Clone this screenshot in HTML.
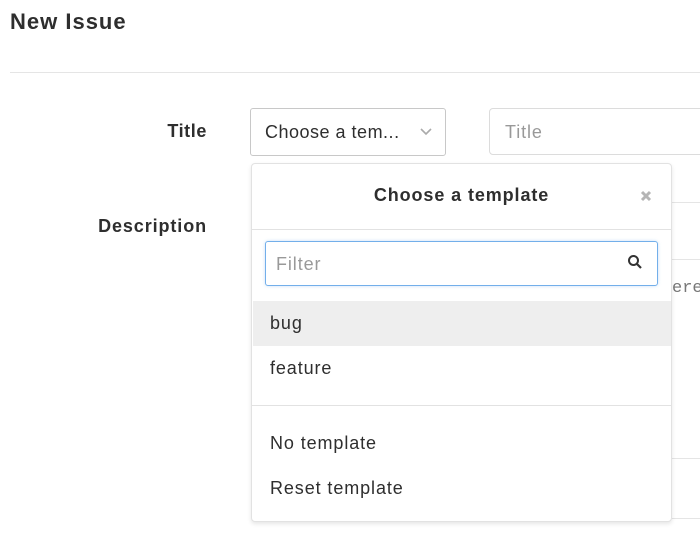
<!DOCTYPE html>
<html><head><style>
body{margin:0;width:700px;height:550px;overflow:hidden;background:#fff;font-family:"Liberation Sans",sans-serif;color:#2e2e2e;position:relative}
.a{position:absolute}
.t{letter-spacing:0.9px}
</style></head><body>
<div class="a" style="left:10px;top:9px;font-size:22px;font-weight:bold;letter-spacing:1px;color:#2e2e2e">New Issue</div>
<div class="a" style="left:10px;top:72px;width:690px;height:1px;background:#e5e5e5"></div>
<div class="a" style="left:100px;top:121px;width:107px;text-align:right;font-size:18px;font-weight:bold;letter-spacing:0.6px">Title</div>
<div class="a" style="left:40px;top:216px;width:167px;text-align:right;font-size:18px;font-weight:bold;letter-spacing:0.9px">Description</div>
<div class="a" style="left:250px;top:108px;border:1px solid #c8c8c8;border-radius:3px;box-sizing:border-box;width:196px;height:48px"></div>
<div class="a t" style="left:265px;top:122px;font-size:18px;letter-spacing:0.5px;color:#2e2e2e">Choose a tem...</div>
<svg class="a" style="left:420px;top:128px" width="12" height="8"><path d="M1 1L6 6L11 1" fill="none" stroke="#aaa" stroke-width="1.6"/></svg>
<div class="a" style="left:489px;top:108px;width:230px;height:47px;border:1px solid #dcdcdc;border-radius:4px;box-sizing:border-box"></div>
<div class="a t" style="left:505px;top:122px;font-size:18px;color:#999">Title</div>
<div class="a" style="left:672px;top:202px;width:28px;height:1px;background:#e5e5e5"></div>
<div class="a" style="left:672px;top:259px;width:28px;height:1px;background:#e5e5e5"></div>
<div class="a" style="left:672px;top:458px;width:28px;height:1px;background:#e5e5e5"></div>
<div class="a" style="left:672px;top:518px;width:28px;height:1px;background:#e5e5e5"></div>
<div class="a" style="left:672px;top:279px;font-family:'Liberation Mono',monospace;font-size:17px;color:#777">ere</div>
<div class="a" style="left:251px;top:163px;width:421px;height:359px;border:1px solid #e2e2e2;border-radius:4px;box-sizing:border-box;background:#fff;box-shadow:0 2px 4px rgba(0,0,0,.1)">
<div class="a" style="left:0;top:21px;width:419px;text-align:center;font-size:18px;font-weight:bold;letter-spacing:0.9px">Choose a template</div>
<svg class="a" style="left:388px;top:26px" width="12" height="12"><path d="M2 2L10 10M10 2L2 10" stroke="#b5b5b5" stroke-width="3"/></svg>
<div class="a" style="left:0;top:65px;width:419px;height:1px;background:#e2e2e2"></div>
<div class="a" style="left:13px;top:77px;width:393px;height:45px;border:1px solid #73afea;border-radius:3px;box-sizing:border-box;box-shadow:0 0 3px rgba(115,175,234,.4)"></div>
<div class="a t" style="left:24px;top:90px;font-size:18px;color:#999">Filter</div>
<svg class="a" style="left:375px;top:90px" width="16" height="16"><circle cx="6.5" cy="6.5" r="4.5" fill="none" stroke="#333" stroke-width="2"/><path d="M10 10L14 14" stroke="#333" stroke-width="2.2"/></svg>
<div class="a" style="left:1px;top:137px;width:418px;height:45px;background:#eee"></div>
<div class="a t" style="left:18px;top:149px;font-size:18px">bug</div>
<div class="a t" style="left:18px;top:194px;font-size:18px">feature</div>
<div class="a" style="left:0;top:241px;width:419px;height:1px;background:#e2e2e2"></div>
<div class="a t" style="left:18px;top:269px;font-size:18px">No template</div>
<div class="a t" style="left:18px;top:314px;font-size:18px">Reset template</div>
</div>
</body></html>
